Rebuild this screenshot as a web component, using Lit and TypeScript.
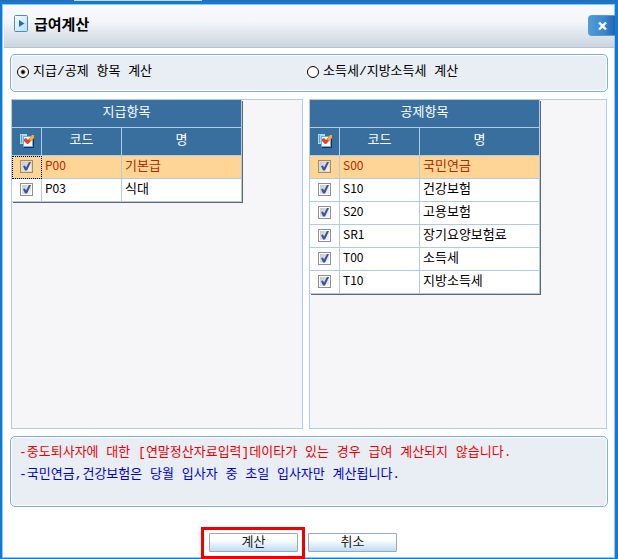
import { LitElement, html, css, svg } from "lit";
import { customElement, property, state } from "lit/decorators.js";
import { classMap } from "lit/directives/class-map.js";

interface PayItem {
  code: string;
  name: string;
}

const PAY_ITEMS: PayItem[] = [
  { code: "P00", name: "기본급" },
  { code: "P03", name: "식대" },
];

const DEDUCTION_ITEMS: PayItem[] = [
  { code: "S00", name: "국민연금" },
  { code: "S10", name: "건강보험" },
  { code: "S20", name: "고용보험" },
  { code: "SR1", name: "장기요양보험료" },
  { code: "T00", name: "소득세" },
  { code: "T10", name: "지방소득세" },
];

// Stacked sheets with an orange tick: the "select all" column icon.
const selectAllIcon = svg`
  <svg viewBox="0 0 14 14" width="14" height="14" aria-hidden="true">
    <path d="M0 0H7V2H3V10H0Z" fill="#a4dcf8"/>
    <path d="M1 2H2M1 4H2M1 6H2M1 8H2" stroke="#1f64a8"/>
    <path d="M4 4H14V14H4Z" fill="#102f66"/>
    <rect x="3" y="2" width="10" height="11" fill="#5fb4ee"/>
    <rect x="4" y="3" width="8" height="9" fill="#f4f8fc"/>
    <path d="M4 5L6 4L8 6L12 1H14V4L8 10H7L4 7Z" fill="#e8441c"/>
    <path d="M9 5L12 1H14V4L11 7Z" fill="#f8b020"/>
  </svg>`;

@customElement("item-grid")
export class ItemGrid extends LitElement {
  @property() caption = "";
  @property({ attribute: false }) items: PayItem[] = [];
  @property({ type: Boolean }) focused = false;

  static styles = css`
    :host {
      display: block;
      border: 1px solid #b2cde3;
      background: #f6f6f9;
    }
    .grid {
      width: 230px;
      table-layout: fixed;
      border-spacing: 0;
      box-shadow: 1px 1px 0 #62666e;
      font: 13px/18px "Liberation Mono", "Noto Sans CJK KR", monospace;
      color: #000;
      background: #fff;
    }
    .col-check {
      width: 30px;
    }
    .col-code {
      width: 80px;
    }
    th,
    td {
      box-sizing: border-box;
      padding: 0;
      border-right: 1px solid #b0cbe4;
      border-bottom: 1px solid #b0cbe4;
    }
    th {
      height: 28px;
      padding-bottom: 2px;
      background: #386f9f;
      color: #fff;
      font-weight: normal;
      text-align: center;
    }
    .all svg {
      display: block;
      margin: 0 auto;
    }
    td {
      height: 23px;
      padding: 0 3px;
    }
    .code {
      padding-bottom: 4px;
      font-family: "Noto Sans CJK KR", sans-serif;
      font-size: 12px;
    }
    .tick {
      padding: 0 0 2px;
    }
    .selected td {
      background: #ffd596;
      color: #b42800;
    }
    .focused {
      outline: 1px dotted #000;
      outline-offset: -1px;
    }
    .box {
      display: grid;
      width: 13px;
      height: 13px;
      margin: 0 auto;
    }
    .box input,
    .box svg {
      grid-area: 1 / 1;
    }
    .box input {
      appearance: none;
      box-sizing: border-box;
      width: 13px;
      height: 13px;
      margin: 0;
      border: 1px solid #8e8f8f;
      background: linear-gradient(135deg, #c4c9d2, #f4f5f7) content-box #fff;
      padding: 1px;
    }
    .box svg {
      pointer-events: none;
      visibility: hidden;
    }
    .box input:checked + svg {
      visibility: visible;
    }
  `;

  render() {
    return html`
      <table class="grid">
        <colgroup>
          <col class="col-check" />
          <col class="col-code" />
          <col />
        </colgroup>
        <thead>
          <tr>
            <th colspan="3">${this.caption}</th>
          </tr>
          <tr>
            <th class="all" aria-label="선택">${selectAllIcon}</th>
            <th>코드</th>
            <th>명</th>
          </tr>
        </thead>
        <tbody>
          ${this.items.map(
            (item, i) => html`
              <tr class=${classMap({ selected: i === 0 })}>
                <td class=${classMap({ tick: true, focused: this.focused && i === 0 })}>
                  <label class="box">
                    <input type="checkbox" aria-label=${item.name} checked />
                    <svg viewBox="0 0 13 13" width="13" height="13" aria-hidden="true">
                      <path d="M3 6L5 5.500L6 7.500L9 2H11L7 10.500H5Z" fill="#3b5396" />
                    </svg>
                  </label>
                </td>
                <td class="code">${item.code}</td>
                <td>${item.name}</td>
              </tr>
            `,
          )}
        </tbody>
      </table>
    `;
  }
}

@customElement("app-root")
export class AppRoot extends LitElement {
  @state() private mode = "items";

  static styles = css`
    :host {
      display: flex;
      flex-direction: column;
      box-sizing: border-box;
      min-height: 100vh;
      background: #1279d6;
      padding: 0 3px 1px 2px;
      font: 13px/18px "Liberation Mono", "Noto Sans CJK KR", monospace;
      color: #000;
    }
    .backdrop {
      height: 1px;
      margin: 0 -3px 3px -2px;
      background: linear-gradient(90deg, #3b66a4 74px, #c9dcf2 74px 202px, #3b66a4 202px);
    }
    .dialog {
      flex: 1;
      display: flex;
      flex-direction: column;
      border: 1px solid #8cc8f8;
      background: #fff;
    }
    .head {
      display: flex;
      align-items: flex-start;
      justify-content: space-between;
      box-sizing: border-box;
      height: 43px;
      padding: 10px 0 0 10px;
      margin-left: 1px;
      border-bottom: 1px solid #b4c3d4;
      background: linear-gradient(#f9fafd, #f4f6fa 38%, #cbd5e0);
    }
    .title {
      display: flex;
      gap: 6px;
      margin: 0;
      font-size: 15px;
      line-height: 24px;
      font-weight: bold;
    }
    .close {
      display: grid;
      place-items: center;
      width: 27px;
      height: 21px;
      margin-right: -1px;
      padding: 0;
      border: 1px solid #5b9bd0;
      border-right: 0;
      border-radius: 4px 0 0 4px;
      background: linear-gradient(90deg, #4e9cd8, #3a87cc 60%, #2263b4);
    }
    .body {
      flex: 1;
      display: flex;
      flex-direction: column;
      padding: 6px 6px 5px 7px;
    }
    .card {
      box-sizing: border-box;
      border: 1px solid #7fafd9;
      border-radius: 5px;
      box-shadow: inset 0 0 0 1px #fff;
      background: #e8eef4;
    }
    .modes {
      display: grid;
      grid-template-columns: 290fr 294fr;
      height: 38px;
      padding: 8px 6px;
    }
    .mode {
      display: flex;
      align-items: flex-start;
      gap: 4px;
    }
    .mode input {
      appearance: none;
      box-sizing: border-box;
      width: 12px;
      height: 12px;
      margin: 3px 0 0;
      border: 1px solid #000;
      border-radius: 50%;
      background: #fff;
    }
    .mode input:checked {
      background: radial-gradient(circle, #000 1px, #fff 3px);
    }
    .panels {
      flex: 1;
      display: grid;
      grid-template-columns: minmax(232px, 292fr) minmax(232px, 298fr);
      gap: 6px;
      margin: 7px 1px;
    }
    .notes {
      min-height: 71px;
      padding: 5px 8px;
      line-height: 22px;
    }
    .notes p {
      margin: 0;
    }
    .warn {
      color: #f00000;
    }
    .info {
      color: #0000d8;
    }
    .actions {
      display: flex;
      justify-content: center;
      gap: 10px;
      padding: 26px 12px 0 0;
    }
    .slot {
      position: relative;
    }
    .marked::after {
      content: "";
      position: absolute;
      inset: -6px -7px -7px -8px;
      border: 3px solid #f00000;
      pointer-events: none;
    }
    .action {
      display: block;
      width: 89px;
      height: 19px;
      padding: 0;
      border: 1px solid #9aa7bd;
      border-radius: 1px;
      background: linear-gradient(#fff 35%, #bddcf6);
      font: inherit;
      line-height: 17px;
      color: #222;
    }
  `;

  private renderMode(value: string, text: string) {
    return html`
      <label class="mode">
        <input
          type="radio"
          name="mode"
          .checked=${this.mode === value}
          @change=${() => (this.mode = value)}
        />
        <span>${text}</span>
      </label>
    `;
  }

  render() {
    return html`
      <div class="backdrop"></div>
      <div class="dialog">
        <header class="head">
          <h1 class="title">
            <svg viewBox="0 0 14 18" width="14" height="18" aria-hidden="true">
              <defs>
                <linearGradient id="sheet" x2="1" y2="1">
                  <stop stop-color="#fff" />
                  <stop offset="1" stop-color="#b4dcf4" />
                </linearGradient>
              </defs>
              <rect x=".5" y=".5" width="13" height="16" rx="1" fill="url(#sheet)" stroke="#4c8cc0" />
              <path d="M5 5V12L10.500 8.500Z" fill="#1c72b8" />
            </svg>
            <span>급여계산</span>
          </h1>
          <button class="close" type="button" aria-label="닫기">
            <svg viewBox="0 0 9 8" width="9" height="8" aria-hidden="true">
              <path d="M1 .5L8 7.500M8 .5L1 7.500" stroke="#fff" stroke-width="2.400" />
            </svg>
          </button>
        </header>
        <main class="body">
          <div class="card modes" role="radiogroup">
            ${this.renderMode("items", "지급/공제 항목 계산")}
            ${this.renderMode("tax", "소득세/지방소득세 계산")}
          </div>
          <div class="panels">
            <item-grid caption="지급항목" .items=${PAY_ITEMS} focused></item-grid>
            <item-grid caption="공제항목" .items=${DEDUCTION_ITEMS}></item-grid>
          </div>
          <div class="card notes">
            <p class="warn">-중도퇴사자에 대한 [연말정산자료입력]데이타가 있는 경우 급여 계산되지 않습니다.</p>
            <p class="info">-국민연금,건강보험은 당월 입사자 중 초일 입사자만 계산됩니다.</p>
          </div>
          <div class="actions">
            <div class="slot marked"><button class="action" type="button">계산</button></div>
            <div class="slot"><button class="action" type="button">취소</button></div>
          </div>
        </main>
      </div>
    `;
  }
}
